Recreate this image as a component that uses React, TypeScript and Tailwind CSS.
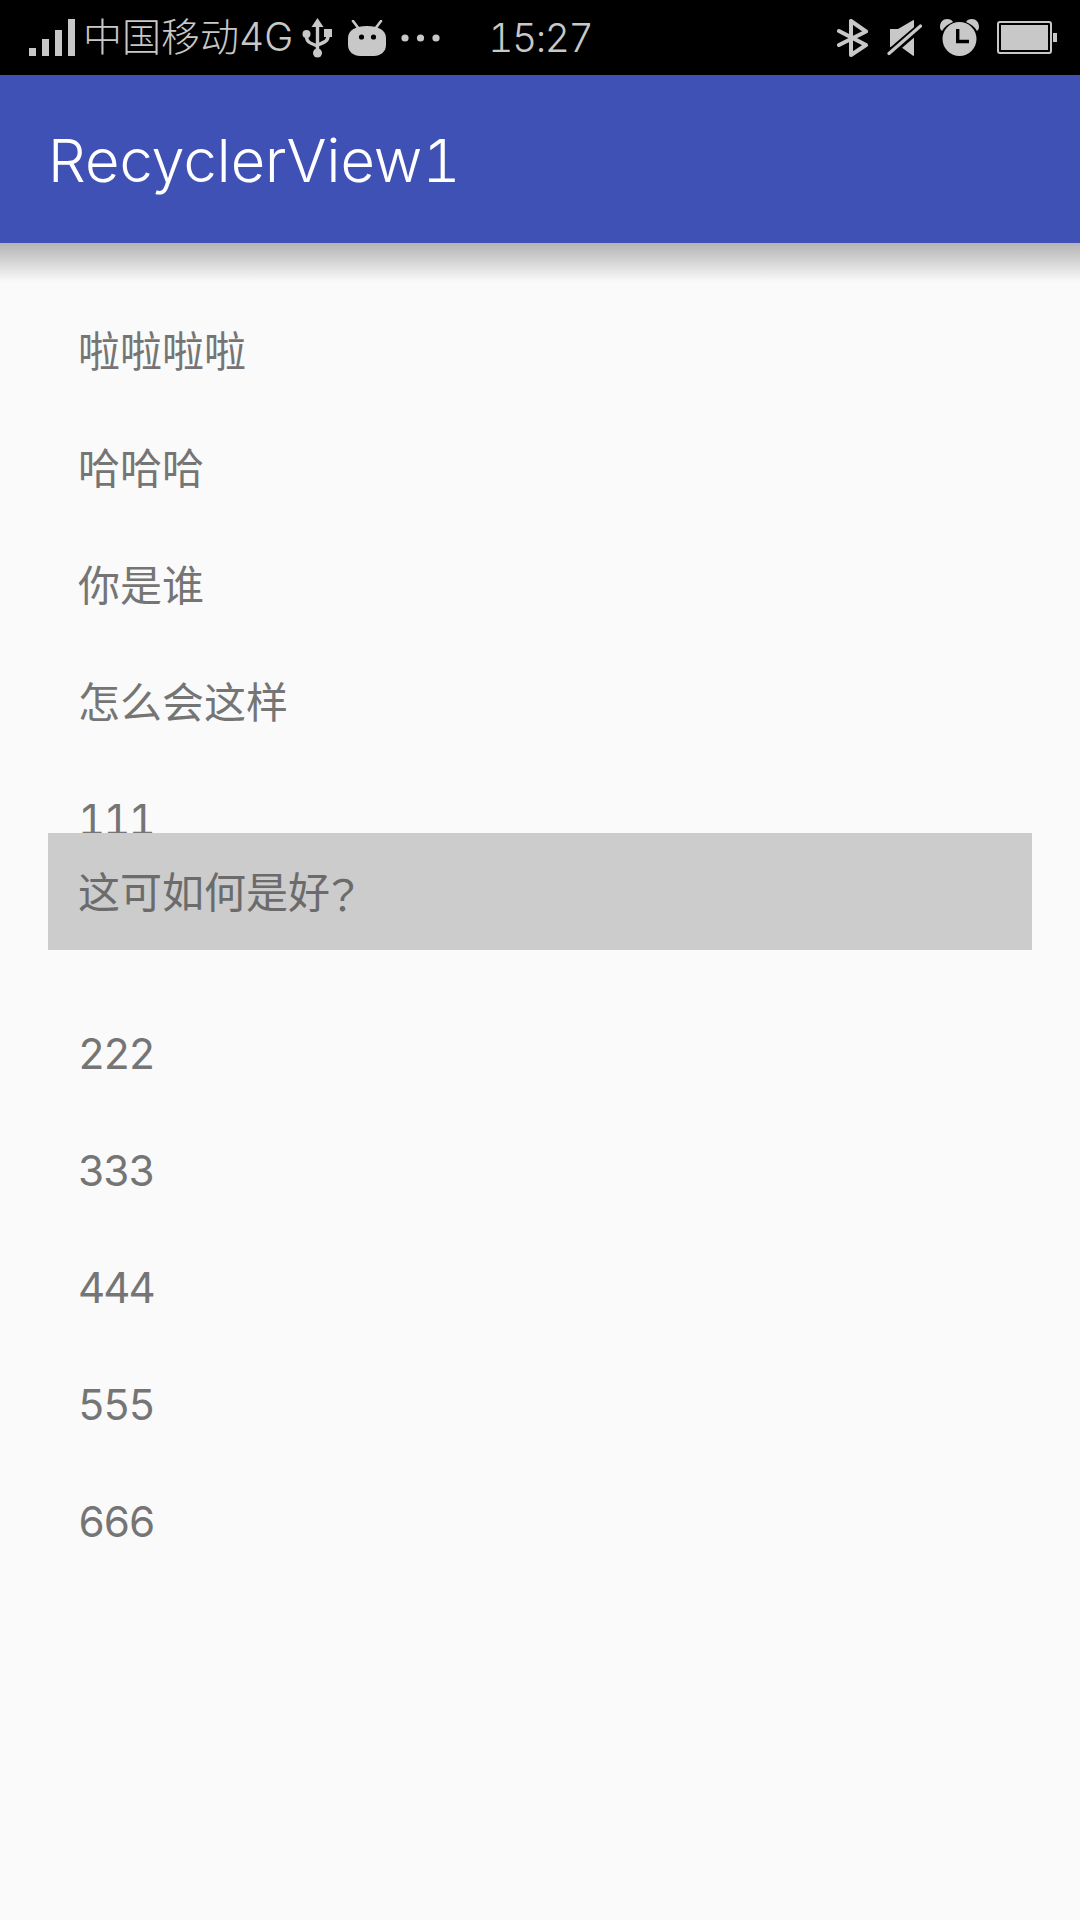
const font = "font-['Inter','Noto_Sans_CJK_SC',sans-serif]";

const rows = ["啦啦啦啦", "哈哈哈", "你是谁", "怎么会这样", "111", "", "222", "333", "444", "555", "666"];

function Signal() {
  return (
    <svg width="46" height="37" viewBox="0 0 46 37" fill="#c8c8c8">
      <rect x="0" y="29" width="7" height="8" />
      <rect x="13" y="20" width="7" height="17" />
      <rect x="26" y="11" width="7" height="26" />
      <rect x="39" y="0" width="7" height="37" />
    </svg>
  );
}

function Usb() {
  return (
    <svg width="31" height="40" viewBox="0 0 31 40" fill="none" stroke="#c8c8c8" strokeWidth="3.4">
      <path d="M15.5 6v28" />
      <path d="M15.5 0l6 9h-12z" fill="#c8c8c8" stroke="none" />
      <circle cx="15.5" cy="35" r="4.5" fill="#c8c8c8" stroke="none" />
      <circle cx="4.5" cy="16" r="4" fill="#c8c8c8" stroke="none" />
      <rect x="22" y="11" width="8" height="8" fill="#c8c8c8" stroke="none" />
      <path d="M4.5 18c0 6 3 7 11 10M26 18c0 5-3 6-10.5 9" />
    </svg>
  );
}

function Robot() {
  return (
    <svg width="38" height="36" viewBox="0 0 38 36" fill="#c8c8c8">
      <path d="M5 1l6 8M33 1l-6 8" stroke="#c8c8c8" strokeWidth="2.6" strokeLinecap="round" />
      <path d="M0 18C0 10 8 6 19 6s19 4 19 12v7c0 7-6 11-12 11H12C6 36 0 32 0 25z" />
      <circle cx="13.5" cy="17" r="2.6" fill="#000" />
      <circle cx="25.5" cy="17" r="2.6" fill="#000" />
    </svg>
  );
}

function Dots() {
  return (
    <svg width="39" height="8" viewBox="0 0 39 8" fill="#c8c8c8">
      <circle cx="4" cy="4" r="3.6" />
      <circle cx="19.5" cy="4" r="3.6" />
      <circle cx="35" cy="4" r="3.6" />
    </svg>
  );
}

function Bluetooth() {
  return (
    <svg width="32" height="38" viewBox="0 0 32 38" fill="none" stroke="#c8c8c8" strokeWidth="4" strokeLinejoin="round" strokeLinecap="round">
      <path d="M2 26L29 12.5 14 2v34l15-10L2 12" />
    </svg>
  );
}

function Muted() {
  return (
    <svg width="35" height="38" viewBox="0 0 35 38" fill="#c8c8c8">
      <path d="M3 10h8L26 1.2c.6-.3 1 0 1 .6v34.400c0 .6-.4.9-1 .6L14 28H3z" />
      <path d="M0 36.500L35 6.500" stroke="#000" strokeWidth="8" />
      <path d="M2 34.500L33.500 7" stroke="#c8c8c8" strokeWidth="3.2" strokeLinecap="round" />
    </svg>
  );
}

function Alarm() {
  return (
    <svg width="39" height="37" viewBox="0 0 39 37" fill="#c8c8c8">
      <path d="M0 8c0-5 3-8 7-8 3 0 5 1 6 3C8 5 4 8 2 12 1 11 0 10 0 8z" />
      <path d="M39 8c0-5-3-8-7-8-3 0-5 1-6 3 5 2 9 5 11 9 1-1 2-2 2-4z" />
      <circle cx="19.500" cy="20" r="17" />
      <path d="M17.700 10v12.500H29" fill="none" stroke="#000" strokeWidth="3.4" />
    </svg>
  );
}

function Battery() {
  return (
    <div className="flex items-center">
      <div className="w-[55px] h-[33px] rounded-[3px] border-[2px] border-[#c8c8c8] p-[2px]">
        <div className="w-full h-full bg-[#c8c8c8]" />
      </div>
      <div className="w-[4px] h-[9px] bg-[#c8c8c8] ml-[1px]" />
    </div>
  );
}

export default function App() {
  return (
    <div className={`relative w-[1080px] h-[1920px] overflow-hidden bg-[#fafafa] flex flex-col ${font}`}>
      {/* Status bar */}
      <div className="h-[75px] bg-black flex items-center text-[#c8c8c8] pl-[29px] pr-[23px]">
        <Signal />
        <span className="ml-[8px] text-[39px] font-light tabular-nums">中国移动4G</span>
        <div className="ml-[9px]"><Usb /></div>
        <div className="ml-[15px]"><Robot /></div>
        <div className="ml-[15px]"><Dots /></div>
        <span className="ml-[48px] pt-[2px] text-[39px] font-light tabular-nums tracking-[-1.5px]">15:27</span>
        <div className="ml-auto flex items-center gap-[18px]">
          <Bluetooth />
          <Muted />
          <Alarm />
          <Battery />
        </div>
      </div>

      {/* App bar */}
      <div className="relative h-[168px] bg-[#3f51b5] flex items-center pl-[48px] pt-[3px] text-white text-[59.5px] font-light tabular-nums">
        RecyclerView1
        <div className="absolute left-0 right-0 top-full h-[39px] bg-gradient-to-b from-[#b4b4b4] to-[#fafafa]" />
      </div>

      {/* List */}
      <div className="pt-[49px] flex flex-col">
        {rows.map((row, i) => (
          <div
            key={i}
            className={`h-[117px] flex items-center pl-[78px] pt-[2px] text-[42px] text-[#757575] tabular-nums ${i > 3 ? "tracking-[-2px]" : ""}`}
          >
            {row}
          </div>
        ))}
      </div>

      {/* Item being dragged */}
      <div className="absolute left-[48px] top-[833px] w-[984px] h-[117px] bg-[#cccccc] flex items-center pl-[30px] pt-[2px] text-[42px] text-[#6b6b6b]">
        这可如何是好<span className="ml-[-8px] font-['Noto_Sans_CJK_TC',sans-serif]">？</span>
      </div>
    </div>
  );
}
